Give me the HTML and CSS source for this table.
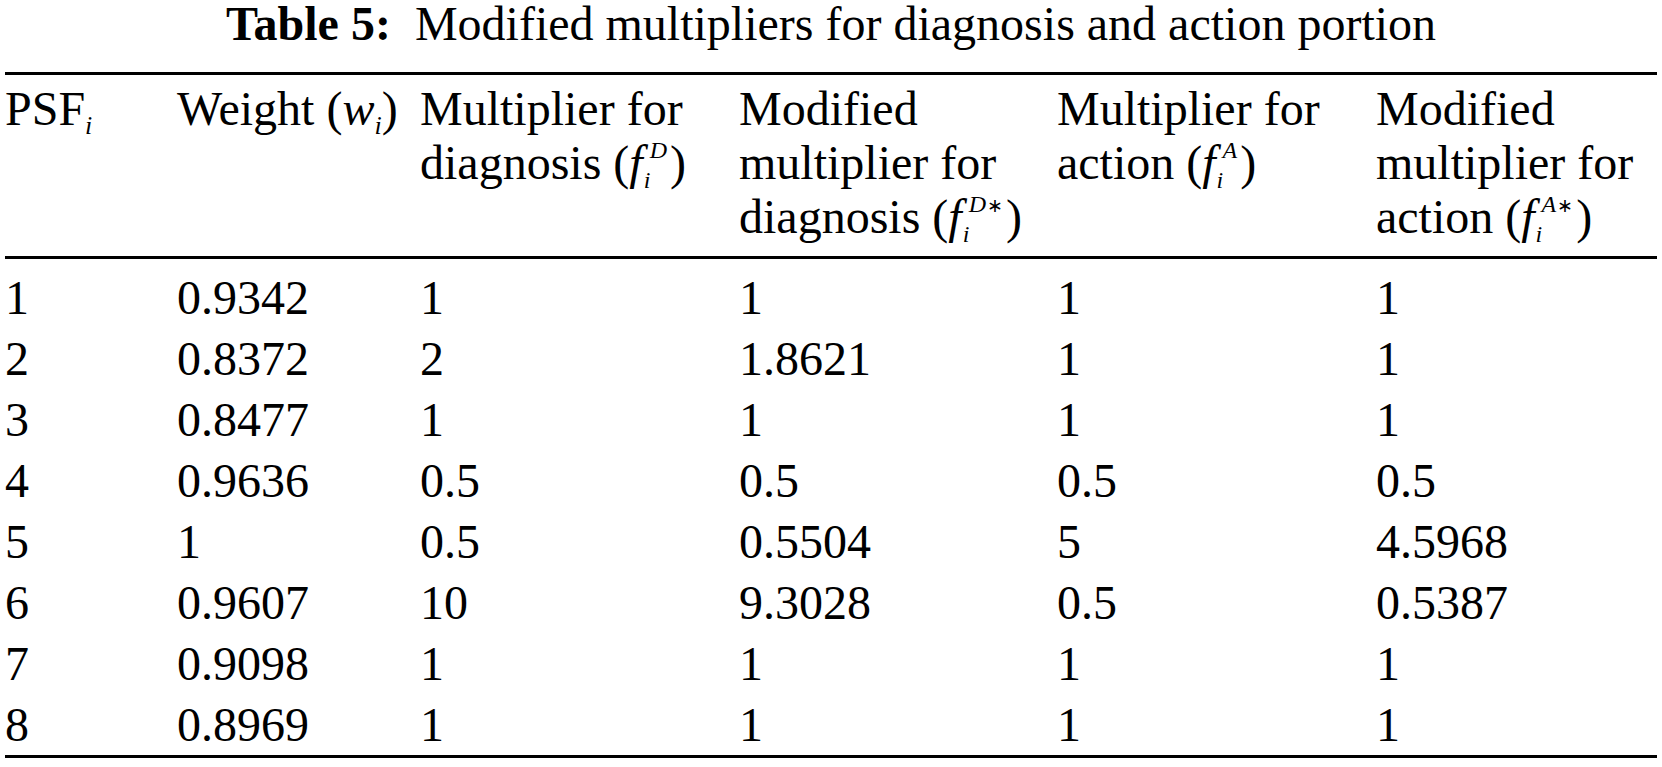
FILE: index.html
```html
<!DOCTYPE html>
<html lang="en">
<head>
<meta charset="utf-8">
<title>Table 5</title>
<link rel="stylesheet" href="styles.css">
</head>
<body>
<div class="page">
  <h1 class="caption"><span class="label">Table 5:</span>Modified multipliers for diagnosis and action portion</h1>
  <table class="data">
    <colgroup>
      <col class="c1"><col class="c2"><col class="c3"><col class="c4"><col class="c5"><col class="c6">
    </colgroup>
    <thead>
      <tr>
        <th>PSF<sub class="isub">i</sub></th>
        <th>Weight (<i>w</i><sub class="isub">i</sub>)</th>
        <th>Multiplier for diagnosis (<i>f</i><span class="ss"><span class="sp">D</span><span class="sb">i</span></span>)</th>
        <th>Modified multiplier for diagnosis (<i>f</i><span class="ss"><span class="sp">D<span class="ast">∗</span></span><span class="sb">i</span></span>)</th>
        <th>Multiplier for action (<i>f</i><span class="ss"><span class="sp">A</span><span class="sb">i</span></span>)</th>
        <th>Modified multiplier for action (<i>f</i><span class="ss"><span class="sp">A<span class="ast">∗</span></span><span class="sb">i</span></span>)</th>
      </tr>
    </thead>
    <tbody>
      <tr><td>1</td><td>0.9342</td><td>1</td><td>1</td><td>1</td><td>1</td></tr>
      <tr><td>2</td><td>0.8372</td><td>2</td><td>1.8621</td><td>1</td><td>1</td></tr>
      <tr><td>3</td><td>0.8477</td><td>1</td><td>1</td><td>1</td><td>1</td></tr>
      <tr><td>4</td><td>0.9636</td><td>0.5</td><td>0.5</td><td>0.5</td><td>0.5</td></tr>
      <tr><td>5</td><td>1</td><td>0.5</td><td>0.5504</td><td>5</td><td>4.5968</td></tr>
      <tr><td>6</td><td>0.9607</td><td>10</td><td>9.3028</td><td>0.5</td><td>0.5387</td></tr>
      <tr><td>7</td><td>0.9098</td><td>1</td><td>1</td><td>1</td><td>1</td></tr>
      <tr><td>8</td><td>0.8969</td><td>1</td><td>1</td><td>1</td><td>1</td></tr>
    </tbody>
  </table>
</div>
</body>
</html>
```

FILE: styles.css
```css
html, body {
  margin: 0;
  padding: 0;
  background: #ffffff;
}
body {
  font-family: "Liberation Serif", "Times New Roman", serif;
  font-size: 48px;
  color: #000000;
}
.page {
  padding: 0 5px;
}
.caption {
  margin: 0;
  height: 72px;
  font-size: 48px;
  line-height: 48px;
  font-weight: normal;
  text-align: center;
}
.caption .label {
  font-weight: bold;
  margin-right: 24px;
}
.data {
  width: 100%;
  table-layout: fixed;
  border-collapse: collapse;
  border-top: 3px solid #000;
  border-bottom: 3px solid #000;
}
.c1 { width: 172px; }
.c2 { width: 243px; }
.c3 { width: 319px; }
.c4 { width: 318px; }
.c5 { width: 319px; }
.c6 { width: auto; }
.data th {
  font-weight: normal;
  text-align: left;
  vertical-align: top;
  padding: 7px 0 12px 0;
  line-height: 54px;
}
.data thead tr {
  border-bottom: 3px solid #000;
}
.data td {
  padding: 0;
  line-height: 61px;
  height: 61px;
  vertical-align: top;
}
.data tbody tr:first-child td {
  padding-top: 8px;
}
.isub {
  font-style: italic;
  font-size: 26px;
  vertical-align: -9px;
  line-height: 0;
}
.ss {
  display: inline-flex;
  flex-direction: column;
  vertical-align: 21px;
  font-size: 24px;
  font-style: italic;
  margin-left: 1px;
  margin-right: 3px;
  line-height: 0;
}
.ss .sp {
  line-height: 0;
  height: 30px;
  padding-left: 6px;
}
.ss .sb {
  line-height: 0;
  height: 0;
}
.ast {
  font-style: normal;
  font-size: 19px;
  margin-left: 1px;
}
```
